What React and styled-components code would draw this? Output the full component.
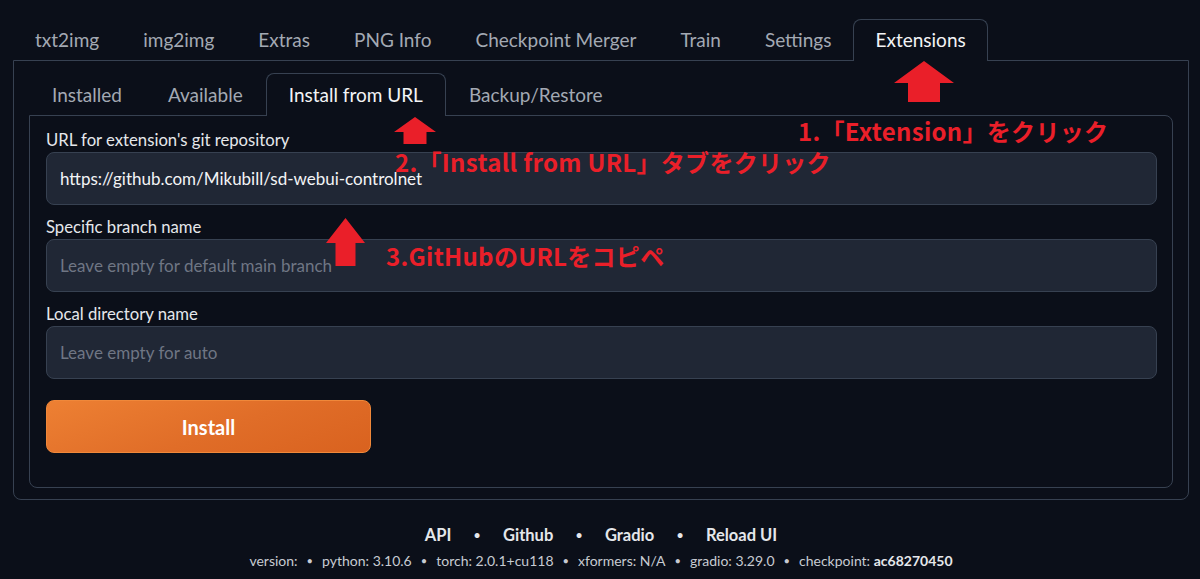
import React from 'react'
import styled, { createGlobalStyle } from 'styled-components'

const GlobalStyle = createGlobalStyle`
  body {
    margin: 0;
    background: #0b0f19;
    font-family: "Lato", "Noto Sans", sans-serif;
    color: #e5e7eb;
  }
`

const Page = styled.div`
  position: relative;
  width: 1200px;
  height: 579px;
  padding: 19px 11px 0 13px;
  box-sizing: border-box;
  overflow: hidden;
`

const TabRow = styled.div`
  display: flex;
  height: ${p => p.$h}px;
`

const Tab = styled.div`
  display: flex;
  align-items: center;
  padding: 0 ${p => p.$side}px ${p => p.$lift}px ${p => p.$side}px;
  font-size: 19px;
  color: ${p => (p.$active ? '#f3f4f6' : '#a3a9b3')};
  border: 1px solid ${p => (p.$active ? '#374151' : 'transparent')};
  border-bottom: none;
  border-radius: 8px 8px 0 0;
  background: ${p => (p.$active ? '#0b0f19' : 'transparent')};
  position: relative;
  z-index: 1;
  margin-bottom: -1px;
  box-sizing: border-box;
`

const Panel = styled.div`
  border: 1px solid #374151;
  border-radius: ${p => p.$radius};
  padding: ${p => p.$pad};
`

const Field = styled.div`
  display: flex;
  flex-direction: column;
  gap: 1px;
  & + & {
    margin-top: 11px;
  }
`

const Label = styled.label`
  font-size: 16.7px;
  line-height: 22px;
  color: #e5e7eb;
`

const Input = styled.input`
  height: 53px;
  box-sizing: border-box;
  background: #202735;
  border: 1px solid #374151;
  border-radius: 8px;
  padding: 0 13px;
  font-family: inherit;
  font-size: 17px;
  color: #f3f4f6;
  outline: none;
  &::placeholder {
    color: #6f7684;
  }
`

const InstallButton = styled.button`
  margin-top: 21px;
  width: 325px;
  height: 53px;
  border: 1px solid #f0883a;
  border-radius: 8px;
  background: linear-gradient(160deg, #ed8033 0%, #e06d28 55%, #d9621f 100%);
  color: #fff;
  font-family: inherit;
  font-weight: 700;
  font-size: 20px;
`

const Footer = styled.footer`
  display: flex;
  flex-direction: column;
  align-items: center;
  padding-top: 24px;
  gap: 6px;
`

const Links = styled.div`
  display: flex;
  gap: 22px;
  font-size: 16.5px;
  line-height: 22px;
  font-weight: 700;
  color: #e5e7eb;
`

const Versions = styled.div`
  display: flex;
  gap: 9px;
  font-size: 14px;
  line-height: 18px;
  color: #c7cbd2;
  b {
    color: #e5e7eb;
  }
`

const Sep = styled.span`
  font-size: 0.8em;
  font-weight: 400;
`

const Note = styled.div`
  position: absolute;
  left: ${p => p.$x}px;
  top: ${p => p.$y}px;
  font-family: "Noto Sans CJK JP", sans-serif;
  font-weight: 700;
  font-size: 24px;
  line-height: 24px;
  letter-spacing: 0.3px;
  color: #ea1f29;
  white-space: nowrap;
  z-index: 5;
`

const ArrowBox = styled.svg`
  position: absolute;
  left: ${p => p.$x}px;
  top: ${p => p.$y}px;
  z-index: 5;
`

function Arrow({ x, y, w, h, head, shaft }) {
  const s0 = (w - shaft) / 2
  const s1 = s0 + shaft
  const pts = `${w / 2},0 ${w},${head} ${s1},${head} ${s1},${h} ${s0},${h} ${s0},${head} 0,${head}`
  return (
    <ArrowBox $x={x} $y={y} width={w} height={h} viewBox={`0 0 ${w} ${h}`}>
      <polygon points={pts} fill="#ea1f29" />
    </ArrowBox>
  )
}

const mainTabs = ['txt2img', 'img2img', 'Extras', 'PNG Info', 'Checkpoint Merger', 'Train', 'Settings', 'Extensions']
const extTabs = ['Installed', 'Available', 'Install from URL', 'Backup/Restore']

function Dot() {
  return <Sep>•</Sep>
}

export default function App() {
  return (
    <Page>
      <GlobalStyle />
      <TabRow $h={41}>
        {mainTabs.map(t => (
          <Tab key={t} $side={21} $lift={3} $active={t === 'Extensions'}>{t}</Tab>
        ))}
      </TabRow>
      <Panel $pad="12px 15px 11px 15px" $radius="0 0 8px 8px">
        <TabRow $h={42}>
          {extTabs.map(t => (
            <Tab key={t} $side={22} $lift={1} $active={t === 'Install from URL'}>{t}</Tab>
          ))}
        </TabRow>
        <Panel $pad="13px 15px 34px 16px" $radius="0 8px 8px 8px">
          <Field>
            <Label>URL for extension's git repository</Label>
            <Input defaultValue="https://github.com/Mikubill/sd-webui-controlnet" />
          </Field>
          <Field>
            <Label>Specific branch name</Label>
            <Input placeholder="Leave empty for default main branch" />
          </Field>
          <Field>
            <Label>Local directory name</Label>
            <Input placeholder="Leave empty for auto" />
          </Field>
          <InstallButton>Install</InstallButton>
        </Panel>
      </Panel>
      <Footer>
        <Links>
          <span>API</span><Dot /><span>Github</span><Dot /><span>Gradio</span><Dot /><span>Reload UI</span>
        </Links>
        <Versions>
          <span>version: </span><Dot />
          <span>python: 3.10.6</span><Dot />
          <span>torch: 2.0.1+cu118</span><Dot />
          <span>xformers: N/A</span><Dot />
          <span>gradio: 3.29.0</span><Dot />
          <span>checkpoint: <b>ac68270450</b></span>
        </Versions>
      </Footer>

      <Arrow x={894} y={61} w={60} h={41} head={22} shaft={32} />
      <Arrow x={394} y={117} w={42} h={27} head={15} shaft={23} />
      <Arrow x={326} y={218} w={39} h={48} head={25} shaft={20} />
      <Note $x={798} $y={119}>1.「Extension」をクリック</Note>
      <Note $x={395} $y={150}>2.「Install from URL」タブをクリック</Note>
      <Note $x={386} $y={244}>3.GitHubのURLをコピペ</Note>
    </Page>
  )
}
